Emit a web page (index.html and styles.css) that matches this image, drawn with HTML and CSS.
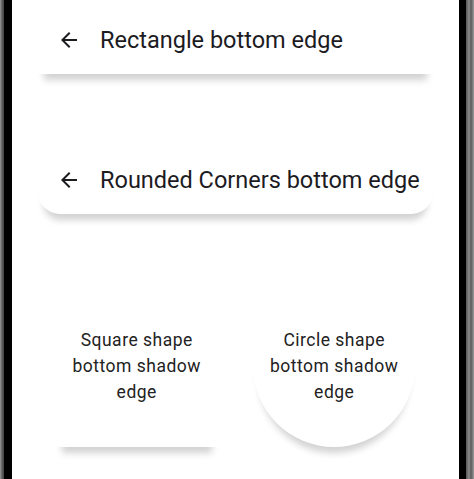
FILE: index.html
```html
<!DOCTYPE html>
<html lang="en">
<head>
  <meta charset="UTF-8">
  <title>Shadow edges</title>
  <meta name="viewport" content="width=device-width, initial-scale=1.0">
  <link rel="stylesheet" href="styles.css">
</head>
<body>
  <div class="device">
    <div class="screen">

      <div class="top-bar">
        <svg class="back-icon" viewBox="0 0 24 24"><path d="M20 11H7.83l5.59-5.59L12 4l-8 8 8 8 1.41-1.41L7.83 13H20v-2z"/></svg>
        <span class="bar-title">Rectangle bottom edge</span>
      </div>

      <div class="top-bar rounded">
        <svg class="back-icon" viewBox="0 0 24 24"><path d="M20 11H7.83l5.59-5.59L12 4l-8 8 8 8 1.41-1.41L7.83 13H20v-2z"/></svg>
        <span class="bar-title">Rounded Corners bottom edge</span>
      </div>

      <div class="shape-row">
        <div class="shape square">Square shape bottom shadow edge</div>
        <div class="shape circle">Circle shape bottom shadow edge</div>
      </div>

    </div>
  </div>
</body>
</html>
```

FILE: styles.css
```css
* { box-sizing: border-box; }

html, body {
  margin: 0;
  padding: 0;
  height: 100%;
  overflow: hidden;
}

body {
  font-family: Roboto, 'Noto Sans', sans-serif;
  color: #1c1b1f;
  background: #777;
}

.device {
  height: 100%;
  padding: 0 8px 0 4px;
  background: linear-gradient(90deg, #9a9a9a 0, #5e5e5e 2px, #444 4px, #000 4px, #000 466px, #555 466px, #8a8a8a 469px, #5a5a5a 471px, #9a9a9a 474px);
}

.device > .screen {
  height: 100%;
  margin-left: 8px;
  background: #fff;
  padding: 6px 26px 0;
  width: 447px;
}

.top-bar {
  display: flex;
  align-items: center;
  height: 68px;
  padding-left: 19px;
  background: #fff;
  box-shadow: 0 12px 7px -6px rgba(0, 0, 0, 0.18);
}

.top-bar.rounded {
  margin-top: 72px;
  border-radius: 0 0 22px 22px;
}

.back-icon {
  width: 24px;
  height: 24px;
  fill: #1c1b1f;
  flex-shrink: 0;
}

.bar-title {
  margin-left: 19px;
  font-size: 23.5px;
  white-space: nowrap;
}

.shape-row {
  display: flex;
  justify-content: space-around;
  margin-top: 71px;
}

.shape {
  width: 162px;
  height: 162px;
  display: flex;
  align-items: center;
  justify-content: center;
  text-align: center;
  padding: 0 12px;
  font-size: 17.5px;
  line-height: 26px;
  letter-spacing: 0.5px;
  background: #fff;
  color: #222;
  box-shadow: 0 12px 7px -6px rgba(0, 0, 0, 0.18);
}

.circle {
  border-radius: 50%;
}
```
